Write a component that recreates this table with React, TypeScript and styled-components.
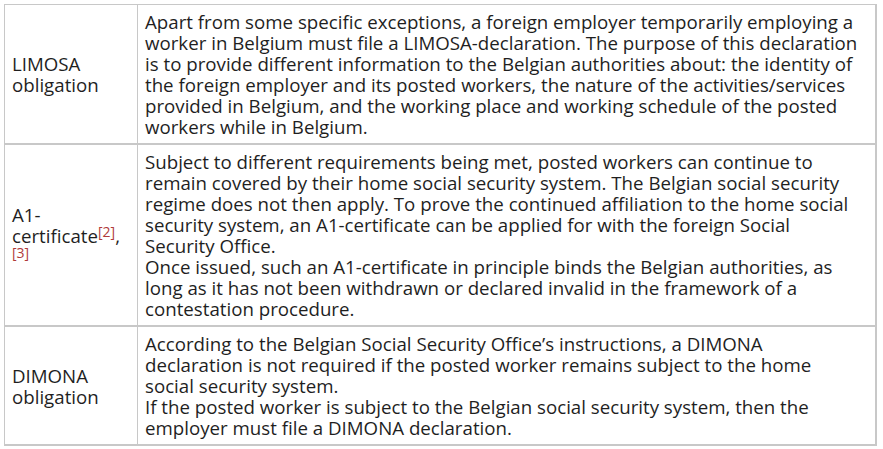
import React, { FC } from 'react';
import styled, { createGlobalStyle } from 'styled-components';

const GlobalStyle = createGlobalStyle`
  html, body {
    margin: 0;
    padding: 0;
    background: #fff;
  }
  body {
    font-family: "Open Sans", "Noto Sans", sans-serif;
    color: #1f1f1f;
  }
`;

const Page = styled.div`
  padding: 4px;
`;

const Table = styled.div`
  display: grid;
  grid-template-columns: 133px 739px;
  border-top: 1px solid #c8c8c8;
  border-left: 1px solid #c8c8c8;
  width: max-content;
`;

const Cell = styled.div<{ $label?: boolean }>`
  box-sizing: border-box;
  padding: 6px 7px;
  border-bottom: 2px solid #c8c8c8;
  border-right: ${(p) => (p.$label ? '1px' : '2px')} solid #c8c8c8;
  font-size: 18.7px;
  line-height: 21px;
  display: flex;
  flex-direction: column;
  justify-content: center;
`;

const Ref = styled.sup`
  color: #b03a3a;
  font-size: 14px;
  line-height: 1;
  vertical-align: baseline;
  position: relative;
  top: -6px;
`;

const Line = styled.div`
  white-space: nowrap;
`;

interface RowProps {
  label: React.ReactNode;
  lines: string[];
}

const Row: FC<RowProps> = ({ label, lines }) => (
  <>
    <Cell $label>
      <div>{label}</div>
    </Cell>
    <Cell>
      {lines.map((l, i) => (
        <Line key={i}>{l}</Line>
      ))}
    </Cell>
  </>
);

export default function App() {
  return (
    <>
      <GlobalStyle />
      <Page>
        <Table>
          <Row
            label={
              <>
                LIMOSA
                <br />
                obligation
              </>
            }
            lines={[
              'Apart from some specific exceptions, a foreign employer temporarily employing a',
              'worker in Belgium must file a LIMOSA-declaration. The purpose of this declaration',
              'is to provide different information to the Belgian authorities about: the identity of',
              'the foreign employer and its posted workers, the nature of the activities/services',
              'provided in Belgium, and the working place and working schedule of the posted',
              'workers while in Belgium.',
            ]}
          />
          <Row
            label={
              <>
                A1-
                <br />
                certificate<Ref>[2]</Ref>,
                <br />
                <Ref>[3]</Ref>
              </>
            }
            lines={[
              'Subject to different requirements being met, posted workers can continue to',
              'remain covered by their home social security system. The Belgian social security',
              'regime does not then apply. To prove the continued affiliation to the home social',
              'security system, an A1-certificate can be applied for with the foreign Social',
              'Security Office.',
              'Once issued, such an A1-certificate in principle binds the Belgian authorities, as',
              'long as it has not been withdrawn or declared invalid in the framework of a',
              'contestation procedure.',
            ]}
          />
          <Row
            label={
              <>
                DIMONA
                <br />
                obligation
              </>
            }
            lines={[
              'According to the Belgian Social Security Office’s instructions, a DIMONA',
              'declaration is not required if the posted worker remains subject to the home',
              'social security system.',
              'If the posted worker is subject to the Belgian social security system, then the',
              'employer must file a DIMONA declaration.',
            ]}
          />
        </Table>
      </Page>
    </>
  );
}
